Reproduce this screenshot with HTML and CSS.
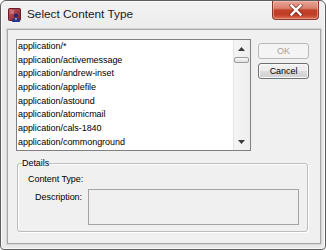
FILE: index.html
```html
<!DOCTYPE html>
<html>
<head>
<meta charset="utf-8">
<link rel="stylesheet" href="styles.css">
</head>
<body>
<div class="window">
  <div class="titlebar">
    <svg class="app-icon" width="13" height="14" viewBox="0 0 13 14">
      <defs>
        <linearGradient id="ig" x1="0" y1="0" x2="1" y2="1">
          <stop offset="0" stop-color="#c45a62"/>
          <stop offset="1" stop-color="#7a1f2c"/>
        </linearGradient>
      </defs>
      <rect x="0.5" y="0.5" width="12" height="12" rx="1" fill="url(#ig)" stroke="#6a1a24"/>
      <rect x="2" y="2" width="4" height="4" fill="#d98a8f" opacity="0.6"/>
      <circle cx="8" cy="7.5" r="2" fill="#1c2a6e"/>
      <path d="M4 14 L5 10.5 Q8 9.5 11 10.5 L12 14 Z" fill="#24368a"/>
      <path d="M7.2 10.2 L8 12.5 L8.8 10.2 Z" fill="#ffffff"/>
    </svg>
    <span class="title">Select Content Type</span>
    <div class="close-btn">
      <svg width="14" height="12" viewBox="0 0 14 12">
        <path d="M2.5 1.5 L11.5 10.5 M11.5 1.5 L2.5 10.5" stroke="#5a1c12" stroke-width="4.2" stroke-linecap="square" opacity="0.55"/>
        <path d="M2.5 1.5 L11.5 10.5 M11.5 1.5 L2.5 10.5" stroke="#ffffff" stroke-width="2.4" stroke-linecap="square"/>
      </svg>
    </div>
  </div>
  <div class="client">
    <div class="top-row">
      <div class="listbox">
        <ul class="items">
          <li>application/*</li>
          <li>application/activemessage</li>
          <li>application/andrew-inset</li>
          <li>application/applefile</li>
          <li>application/astound</li>
          <li>application/atomicmail</li>
          <li>application/cals-1840</li>
          <li>application/commonground</li>
        </ul>
        <div class="scrollbar">
          <div class="sb-btn">
            <svg width="7" height="4" viewBox="0 0 7 4"><polygon points="0,4 3.5,0 7,4" fill="#3a3a3a"/></svg>
          </div>
          <div class="sb-track"><div class="sb-thumb"></div></div>
          <div class="sb-btn">
            <svg width="7" height="4" viewBox="0 0 7 4"><polygon points="0,0 7,0 3.5,4" fill="#3a3a3a"/></svg>
          </div>
        </div>
      </div>
      <div class="buttons">
        <button class="btn disabled">OK</button>
        <button class="btn">Cancel</button>
      </div>
    </div>
    <fieldset class="details">
      <legend>Details</legend>
      <div class="row-ct">Content Type:</div>
      <div class="row-desc">
        <span class="desc-label">Description:</span>
        <div class="desc-box"></div>
      </div>
    </fieldset>
  </div>
</div>
</body>
</html>
```
FILE: styles.css
```css
* { box-sizing: border-box; }
html, body { margin: 0; padding: 0; }
body {
  width: 326px;
  height: 250px;
  overflow: hidden;
  background: #ffffff;
  font-family: "Liberation Sans", Arial, sans-serif;
  font-size: 9px;
  letter-spacing: -0.05px;
  color: #000;
}
.window {
  width: 326px;
  height: 250px;
  border: 1px solid #5e5e5e;
  border-radius: 6px 6px 4px 4px;
  background: linear-gradient(#f2f2f2, #e9e9e9 40px, #e9e9e9);
  display: flex;
  flex-direction: column;
  box-shadow: inset 0 0 0 1px #fafafa;
}
.titlebar {
  height: 28px;
  flex: none;
  display: flex;
  align-items: flex-start;
  padding-left: 7px;
}
.app-icon { margin-top: 7px; flex: none; }
.title {
  margin-left: 6px;
  margin-top: 6px;
  font-size: 11.8px;
  letter-spacing: 0;
  line-height: 14px;
  color: #1a1a1a;
}
.close-btn {
  margin-left: auto;
  margin-right: 6px;
  width: 47px;
  height: 19px;
  border: 1px solid #8a3a2c;
  border-top: none;
  border-radius: 0 0 4px 4px;
  background: linear-gradient(#e9a496 0%, #dc8170 40%, #c4422a 50%, #c23d25 75%, #d86a50 100%);
  box-shadow: inset 0 0 0 1px rgba(255, 210, 200, 0.45);
  display: flex;
  align-items: center;
  justify-content: center;
}
.client {
  flex: 1;
  margin: 0 4px 5px 6px;
  border: 1px solid #a6a6a6;
  box-shadow: 0 0 0 1px #d6d6d6;
  background: #f0f0f0;
  display: flex;
  flex-direction: column;
}
.top-row {
  display: flex;
  align-items: flex-start;
  margin: 9px 0 0 8px;
}
.listbox {
  width: 235px;
  height: 112px;
  border: 1px solid #7f7f7f;
  background: #ffffff;
  display: flex;
  flex: none;
}
.items {
  flex: 1;
  list-style: none;
  margin: 0;
  padding: 0 0 0 1px;
  overflow: hidden;
}
.items li {
  height: 13.7px;
  line-height: 13.7px;
  white-space: nowrap;
}
.scrollbar {
  width: 17px;
  flex: none;
  display: flex;
  flex-direction: column;
  background: linear-gradient(90deg, #e4e4e4 0, #e4e4e4 1px, #f4f4f4 1px, #eeeeee 100%);
}
.sb-btn {
  height: 17px;
  flex: none;
  display: flex;
  align-items: center;
  justify-content: center;
}
.sb-track { flex: 1; }
.sb-thumb {
  margin: 0 1px 0 1px;
  height: 6px;
  border: 1px solid #9c9c9c;
  border-radius: 2px;
  background: linear-gradient(#fbfbfb, #dedede);
}
.buttons {
  margin: 4px 0 0 7px;
  display: flex;
  flex-direction: column;
  gap: 4px;
}
.btn {
  width: 51px;
  height: 16px;
  padding: 0;
  font-family: inherit;
  font-size: 9px;
  letter-spacing: -0.05px;
  color: #000;
  border: 1px solid #707070;
  border-radius: 3px;
  background: linear-gradient(#f2f2f2 0%, #ebebeb 50%, #dddddd 50%, #cfcfcf 100%);
  box-shadow: inset 0 0 0 1px #fbfbfb;
}
.btn.disabled {
  border-color: #b9b9b9;
  background: #f4f4f4;
  color: #a3a3a3;
  box-shadow: none;
}
.details {
  width: 291px;
  margin: 7px 0 0 9px;
  padding: 4px 8px 6px 0;
  min-width: 0;
  border: 1px solid #bdbdbd;
  border-radius: 3px;
  box-shadow: 1px 1px 0 #ffffff, inset 1px 1px 0 #ffffff;
}
.details legend {
  margin-left: 4px;
  padding: 0;
  line-height: 11px;
}
.row-ct {
  margin-left: 10px;
  line-height: 12px;
}
.row-desc {
  display: flex;
  align-items: flex-start;
  margin-top: 4px;
}
.desc-label {
  width: 64px;
  margin-right: 6px;
  padding-top: 2px;
  line-height: 12px;
  text-align: right;
  flex: none;
}
.desc-box {
  flex: 1;
  height: 36px;
  border: 1px solid #a3a3a3;
  background: #f0f0f0;
}
```
